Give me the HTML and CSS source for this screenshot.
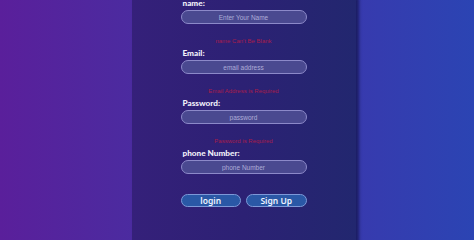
FILE: index.html
```html
<!DOCTYPE html>
<html>
<head>
<meta charset="utf-8">
<link rel="stylesheet" href="styles.css">
</head>
<body>
<div class="page">
  <form class="card">
    <div class="group">
      <label class="label">name:</label>
      <input class="field" type="text" placeholder="Enter Your Name">
      <p class="error">name Can't Be Blank</p>
    </div>
    <div class="group">
      <label class="label">Email:</label>
      <input class="field" type="text" placeholder="email address">
      <p class="error">Email Address is Required</p>
    </div>
    <div class="group">
      <label class="label">Password:</label>
      <input class="field" type="password" placeholder="password">
      <p class="error">Password is Required</p>
    </div>
    <div class="group">
      <label class="label">phone Number:</label>
      <input class="field" type="text" placeholder="phone Number">
    </div>
    <div class="actions">
      <button class="btn" type="button">login</button>
      <button class="btn" type="button">Sign Up</button>
    </div>
  </form>
</div>
</body>
</html>
```
FILE: styles.css
```css
html, body {
  margin: 0;
  padding: 0;
  height: 100%;
  overflow: hidden;
}
body {
  background: linear-gradient(to right, #5a1f9b 0%, #4a2ca0 30%, #3a38ad 70%, #2b44b3 100%);
  font-family: "Lato", "Noto Sans", sans-serif;
}
.page {
  display: flex;
  justify-content: center;
  height: 100%;
}
.card {
  width: 224px;
  margin-left: 13px;
  height: 260px;
  margin-top: -2px;
  background: linear-gradient(to right, #35207a 0%, #2c2174 50%, #22276f 100%);
  box-shadow: 3px 0 3px rgba(10, 10, 50, 0.6);
  display: flex;
  flex-direction: column;
  align-items: center;
}
.group {
  width: 126px;
  display: flex;
  flex-direction: column;
}
.label {
  display: block;
  height: 10px;
  line-height: 11px;
  font-size: 8.2px;
  font-weight: 900;
  color: #f2f0fa;
  padding-left: 2px;
  margin-bottom: 2px;
}
.field {
  box-sizing: border-box;
  width: 126px;
  height: 14px;
  margin: 0;
  padding: 0 6px;
  border: 1px solid #8c89c9;
  border-radius: 8px;
  background: #4a4990;
  color: #fff;
  font-family: "Liberation Sans", Arial, sans-serif;
  font-size: 6.5px;
  text-align: center;
  outline: none;
}
.field::placeholder {
  color: #aeadd8;
}
.error {
  margin: 13px 0 3px;
  height: 8px;
  line-height: 8px;
  font-size: 6px;
  font-family: "Liberation Sans", Arial, sans-serif;
  color: #a81d4c;
  text-align: center;
}
.actions {
  margin-top: 20px;
  width: 126px;
  display: flex;
  gap: 5px;
}
.btn {
  box-sizing: border-box;
  flex: 1;
  height: 13px;
  padding: 0;
  border: 1px solid #7d98d8;
  border-radius: 7px;
  background: #2a58a6;
  color: #eef3ff;
  font-family: "Noto Sans", "Open Sans", sans-serif;
  font-size: 8.5px;
  font-weight: 600;
  line-height: 11px;
}
```
